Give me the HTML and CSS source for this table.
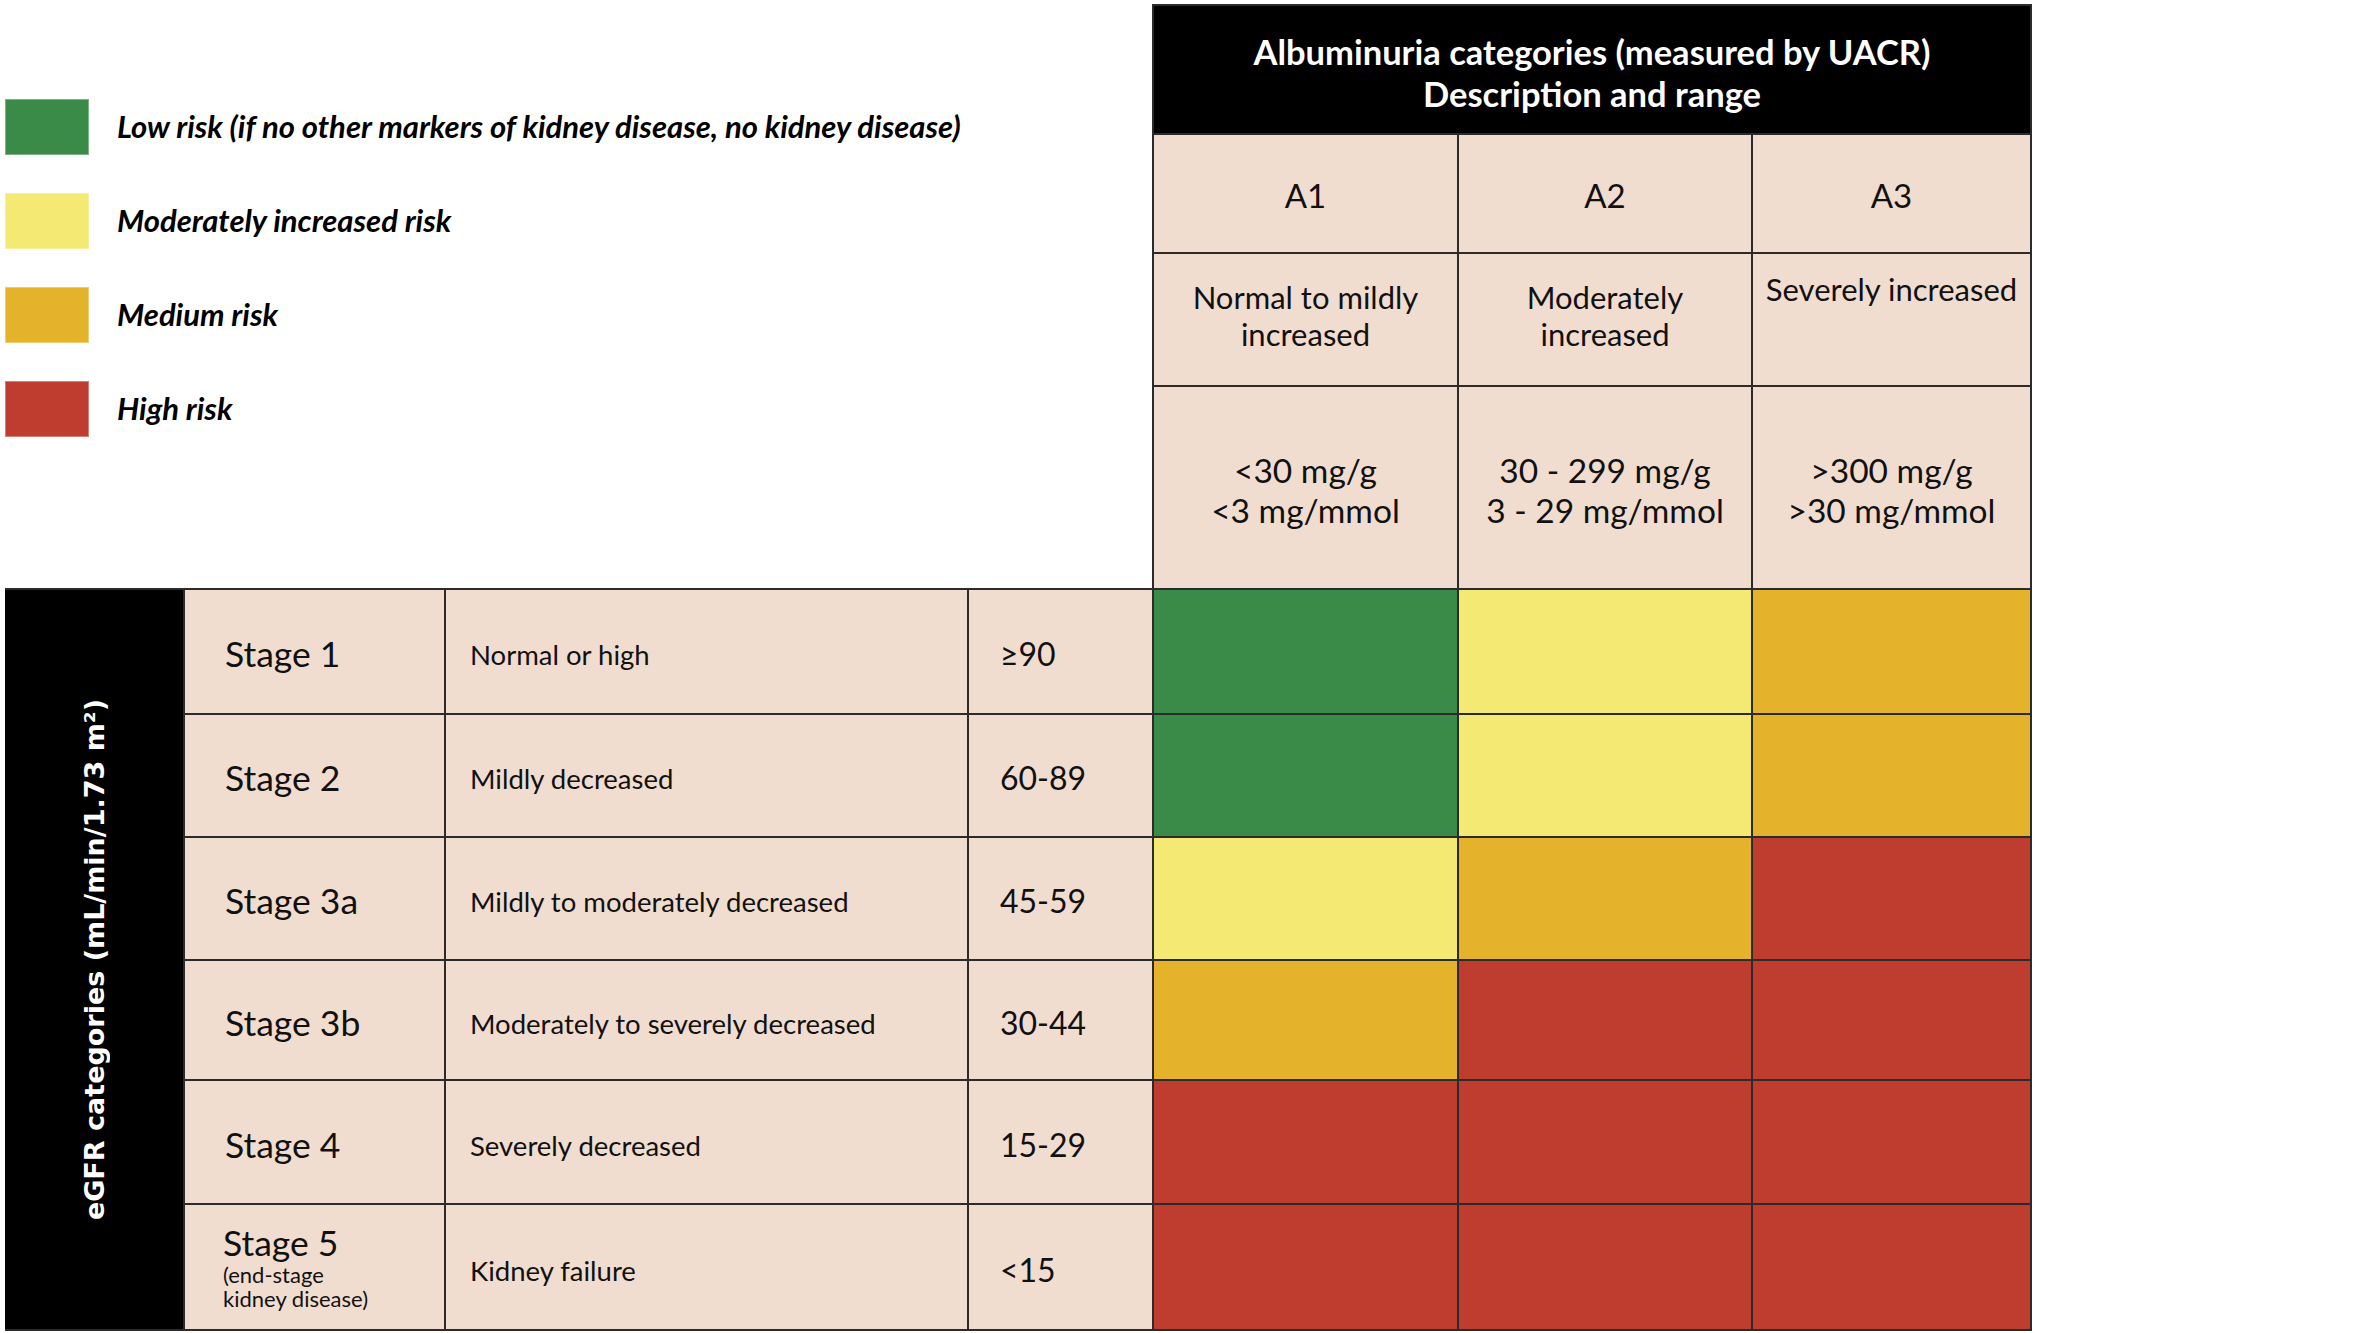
FILE: index.html
```html
<!DOCTYPE html>
<html lang="en">
<head>
<meta charset="utf-8">
<title>CKD risk by eGFR and albuminuria</title>
<link rel="stylesheet" href="styles.css">
</head>
<body>
<div class="page">
  <div class="top">
    <ul class="legend">
      <li class="legend-item"><span class="swatch risk-low"></span><span class="legend-label">Low risk (if no other markers of kidney disease, no kidney disease)</span></li>
      <li class="legend-item"><span class="swatch risk-mod"></span><span class="legend-label">Moderately increased risk</span></li>
      <li class="legend-item"><span class="swatch risk-med"></span><span class="legend-label">Medium risk</span></li>
      <li class="legend-item"><span class="swatch risk-high"></span><span class="legend-label">High risk</span></li>
    </ul>
    <div class="albu">
      <div class="albu-title">Albuminuria categories (measured by UACR)<br>Description and range</div>
      <div class="albu-cell albu-code">A1</div>
      <div class="albu-cell albu-code">A2</div>
      <div class="albu-cell albu-code">A3</div>
      <div class="albu-cell albu-desc">Normal to mildly<br>increased</div>
      <div class="albu-cell albu-desc">Moderately<br>increased</div>
      <div class="albu-cell albu-desc albu-desc-top">Severely increased</div>
      <div class="albu-cell albu-range">&lt;30 mg/g<br>&lt;3 mg/mmol</div>
      <div class="albu-cell albu-range">30 - 299 mg/g<br>3 - 29 mg/mmol</div>
      <div class="albu-cell albu-range">&gt;300 mg/g<br>&gt;30 mg/mmol</div>
    </div>
  </div>

  <div class="grid">
    <div class="egfr"><span class="egfr-label">eGFR categories (mL/min/1.73 m²)</span></div>

    <div class="cell stage">Stage 1</div>
    <div class="cell desc">Normal or high</div>
    <div class="cell value">≥90</div>
    <div class="risk risk-low"></div>
    <div class="risk risk-mod"></div>
    <div class="risk risk-med"></div>

    <div class="cell stage">Stage 2</div>
    <div class="cell desc">Mildly decreased</div>
    <div class="cell value">60-89</div>
    <div class="risk risk-low"></div>
    <div class="risk risk-mod"></div>
    <div class="risk risk-med"></div>

    <div class="cell stage">Stage 3a</div>
    <div class="cell desc">Mildly to moderately decreased</div>
    <div class="cell value">45-59</div>
    <div class="risk risk-mod"></div>
    <div class="risk risk-med"></div>
    <div class="risk risk-high"></div>

    <div class="cell stage">Stage 3b</div>
    <div class="cell desc">Moderately to severely decreased</div>
    <div class="cell value">30-44</div>
    <div class="risk risk-med"></div>
    <div class="risk risk-high"></div>
    <div class="risk risk-high"></div>

    <div class="cell stage">Stage 4</div>
    <div class="cell desc">Severely decreased</div>
    <div class="cell value">15-29</div>
    <div class="risk risk-high"></div>
    <div class="risk risk-high"></div>
    <div class="risk risk-high"></div>

    <div class="cell stage stage-multi"><span class="stage-name">Stage 5</span><span class="stage-sub">(end-stage<br>kidney disease)</span></div>
    <div class="cell desc">Kidney failure</div>
    <div class="cell value">&lt;15</div>
    <div class="risk risk-high"></div>
    <div class="risk risk-high"></div>
    <div class="risk risk-high"></div>
  </div>
</div>
</body>
</html>
```

FILE: styles.css
```css
* { box-sizing: border-box; }

html, body {
  margin: 0;
  padding: 0;
  background: #ffffff;
}

body {
  font-family: Lato, "Open Sans", "Liberation Sans", sans-serif;
  color: #111111;
}

.page {
  width: 2368px;
  height: 1333px;
  padding: 4px 0 0 5px;
}

/* ---------- top: legend + albuminuria header ---------- */
.top {
  display: flex;
  height: 584px;
}

.legend {
  list-style: none;
  margin: 0;
  padding: 95px 0 0 0;
  width: 1147px;
  display: flex;
  flex-direction: column;
  gap: 38px;
}

.legend-item {
  display: flex;
  align-items: center;
  gap: 28px;
  height: 56px;
}

.swatch {
  width: 84px;
  height: 56px;
  flex: none;
  box-shadow: inset 0 0 0 1px rgba(255, 255, 255, 0.35);
}

.legend-label {
  font-weight: 700;
  font-style: italic;
  font-size: 31px;
  color: #000;
  margin-top: -3px;
}

.albu {
  width: 880px;
  display: grid;
  grid-template-columns: 303px 292px 277px;
  grid-template-rows: 127px 117px 131px 201px;
  gap: 2px;
  padding: 2px 2px 0 2px;
  background: #2b2b2b;
}

.albu-title {
  grid-column: 1 / 4;
  background: #000;
  color: #fff;
  font-weight: 700;
  font-size: 34.5px;
  line-height: 42px;
  text-align: center;
  display: flex;
  align-items: center;
  justify-content: center;
  padding-top: 6px;
}

.albu-cell {
  background: #f1ddd0;
  display: flex;
  align-items: center;
  justify-content: center;
  text-align: center;
  color: #111;
}

.albu-code {
  font-size: 33px;
  padding-top: 3px;
}

.albu-desc {
  font-size: 31px;
  line-height: 37px;
  padding-bottom: 8px;
}

.albu-desc-top {
  align-items: flex-start;
  padding: 17px 0 0 0;
}

.albu-range {
  font-size: 33.5px;
  line-height: 40px;
  padding-top: 4px;
}

/* ---------- body grid ---------- */
.grid {
  width: 2027px;
  display: grid;
  grid-template-columns: 178px 259px 521px 183px 303px 292px 277px;
  grid-template-rows: 123px 121px 121px 118px 122px 124px;
  gap: 2px;
  padding: 2px 2px 2px 0;
  background: #2b2b2b;
}

.egfr {
  grid-row: 1 / 7;
  grid-column: 1;
  background: #000;
  display: flex;
  align-items: center;
  justify-content: center;
}

.egfr-label {
  writing-mode: vertical-rl;
  transform: rotate(180deg);
  font-family: "DejaVu Sans", Verdana, sans-serif;
  font-weight: 700;
  font-size: 27px;
  color: #fff;
  white-space: nowrap;
}

.cell {
  background: #f1ddd0;
  display: flex;
  align-items: center;
  color: #111;
  padding-top: 6px;
}

.stage {
  font-size: 35.5px;
  padding-left: 40px;
  padding-top: 4px;
}

.stage-multi {
  flex-direction: column;
  align-items: flex-start;
  justify-content: center;
  padding-left: 38px;
  padding-top: 0;
}

.stage-name {
  line-height: 40px;
}

.stage-sub {
  font-size: 22px;
  line-height: 24px;
}

.desc {
  font-size: 27.5px;
  padding-left: 24px;
}

.value {
  font-size: 32px;
  padding-left: 31px;
  padding-top: 4px;
}

.risk-low  { background: #3a8b48; }
.risk-mod  { background: #f4ea73; }
.risk-med  { background: #e5b22c; }
.risk-high { background: #be3d2f; }
```
